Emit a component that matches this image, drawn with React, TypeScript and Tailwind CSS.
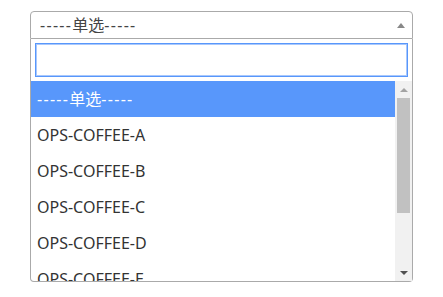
import { useState } from 'react';

const options = ['-----单选-----', 'OPS-COFFEE-A', 'OPS-COFFEE-B', 'OPS-COFFEE-C', 'OPS-COFFEE-D', 'OPS-COFFEE-E', 'OPS-COFFEE-F'];

// dashes in the placeholder render wider in the original font
function Label({ text }: { text: string }) {
  if (!text.startsWith('-----')) return <>{text}</>;
  return (
    <>
      <span className="tracking-[1.3px]">-----</span>
      单选
      <span className="tracking-[1.3px]">-----</span>
    </>
  );
}

export default function App() {
  const [active] = useState(0);

  return (
    <div
      className="pt-[11px] pl-[30px] bg-white min-h-[297px]"
      style={{ fontFamily: '"Noto Sans", "Noto Sans CJK SC", sans-serif' }}
    >
      <div className="w-[383px]">
        {/* Selection */}
        <div className="h-[28px] border border-[#aaa] rounded-t-[4px] flex items-center justify-between pl-[9px] pr-[6px] text-[16px] text-[#444]">
          <span className="leading-[26px]">
            <Label text="-----单选-----" />
          </span>
          <span className="w-0 h-0 border-x-[4px] border-x-transparent border-b-[5px] border-b-[#888] mr-[1px]" />
        </div>

        {/* Dropdown */}
        <div className="border-x border-b border-[#aaa] rounded-b-[4px]">
          <div className="p-[4px]">
            <input
              className="w-full h-[34px] border border-[#5897fb] shadow-[inset_0_0_0_1px_#a9c8fc] outline-none px-[6px] text-[16px]"
              autoFocus
            />
          </div>
          <div className="flex h-[200px] overflow-hidden">
            <ul className="flex-1 overflow-hidden">
              {options.map((o, i) => (
                <li
                  key={o}
                  className={`h-[36px] shrink-0 px-[6px] flex items-center text-[16px] ${
                    i === active ? 'bg-[#5897fb] text-white' : 'text-[#333]'
                  }`}
                >
                  <Label text={o} />
                </li>
              ))}
            </ul>
            {/* Scrollbar */}
            <div className="w-[17px] bg-[#f1f1f1] flex flex-col items-center">
              <div className="h-[17px] flex items-center justify-center">
                <span className="w-0 h-0 border-x-[4px] border-x-transparent border-b-[4px] border-b-[#a3a3a3]" />
              </div>
              <div className="w-[13px] h-[115px] bg-[#c1c1c1]" />
              <div className="flex-1" />
              <div className="h-[17px] flex items-center justify-center">
                <span className="w-0 h-0 border-x-[4px] border-x-transparent border-t-[4px] border-t-[#505050]" />
              </div>
            </div>
          </div>
        </div>
      </div>
    </div>
  );
}
